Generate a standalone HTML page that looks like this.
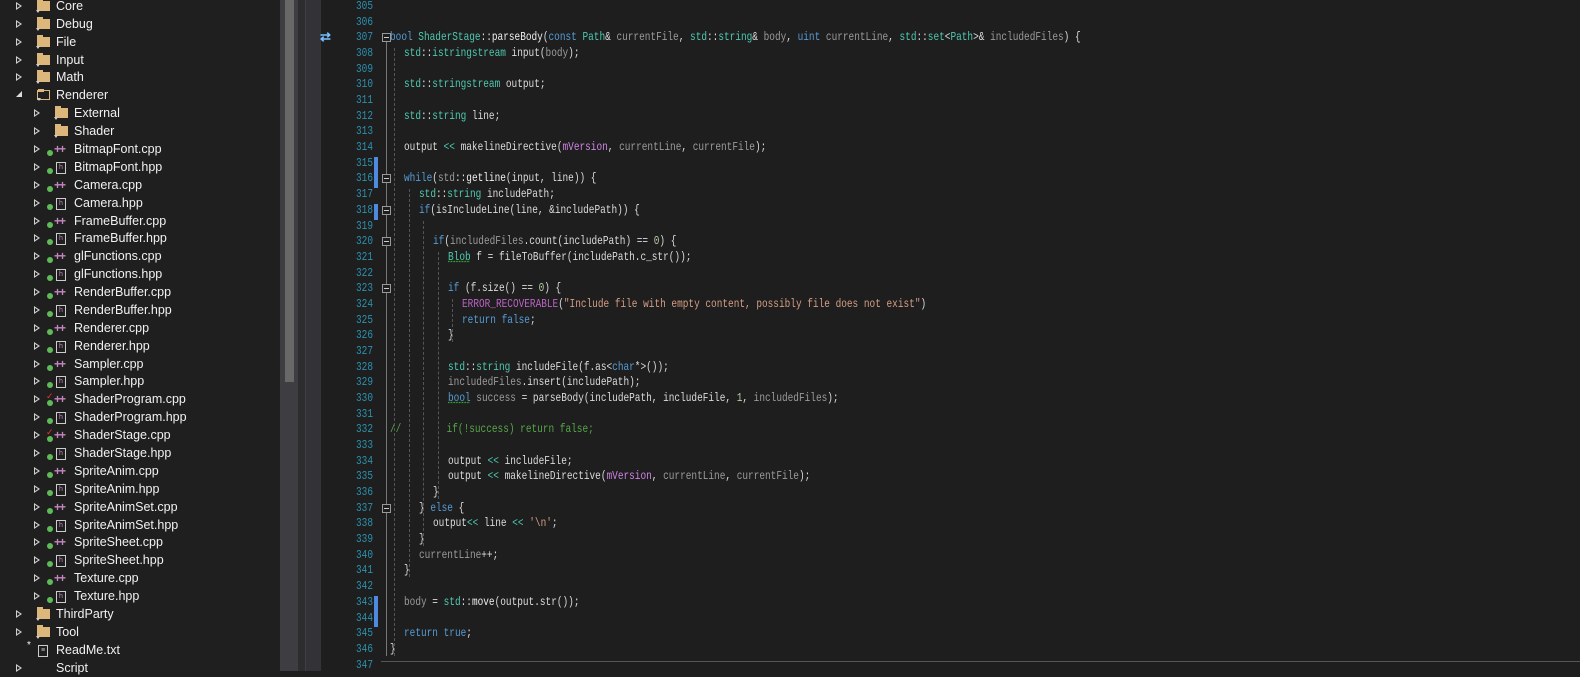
<!DOCTYPE html>
<html><head><style>
body{margin:0;width:1580px;height:671px;overflow:hidden;background:#1e1e1e;position:relative;font-family:"Liberation Sans",sans-serif}
#side{position:absolute;left:0;top:0;width:280px;height:671px;background:#1f1f1f}
.r{position:absolute;height:18px;line-height:18px;font-size:12.5px;color:#f1f1f1;white-space:nowrap}
.tri{position:absolute;top:5px;width:0;height:0;border-left:6px solid #d0d0d0;border-top:4px solid transparent;border-bottom:4px solid transparent}
.tri:after{content:"";position:absolute;left:-5px;top:-2px;border-left:3px solid #1f1f1f;border-top:2px solid transparent;border-bottom:2px solid transparent}
.fold{position:absolute;top:4px;width:13px;height:10px;background:#dcb67a}
.fold:before{content:"";position:absolute;left:0;top:-2px;width:6px;height:3px;background:#dcb67a}
.fold i{position:absolute;left:-1px;bottom:-2px;border-top:3px solid #d0d0d0;border-left:2px solid transparent;border-right:2px solid transparent}
.cpp{position:absolute;top:0px;color:#c586c0;font-weight:bold;font-size:12px;letter-spacing:-2px}
.hpp{position:absolute;top:4px;width:8px;height:10px;border:1px solid #ccc;font-size:7px;line-height:10px;text-align:center;color:#c586c0}
.dot{position:absolute;top:10px;width:6px;height:6px;border-radius:3px;background:#5fbb58}
#sb{position:absolute;left:280px;top:0;width:18px;height:671px;background:#3e3e42}
#th{position:absolute;left:285px;top:0;width:9px;height:382px;background:#686868}
#s2{position:absolute;left:298px;top:0;width:7px;height:671px;background:#2d2d30}
#s3{position:absolute;left:305px;top:0;width:15px;height:671px;background:#333337;border-left:1px solid #3f3f46}
#code{position:absolute;left:0;top:-1px;font-family:"Liberation Mono",monospace;font-size:12px}
.l{position:absolute;height:15.68px;line-height:15.68px;white-space:pre;color:#dcdcdc;transform:scaleX(0.786);transform-origin:0 0}
.n{position:absolute;left:330px;width:55px;text-align:right;color:#2b91af;transform-origin:100% 0}
.k{color:#569cd6}.t{color:#4ec9b0}.p{color:#9b9b9b}.m{color:#d183e8}.s{color:#d69d85}.mc{color:#bd63c5}.c{color:#57a64a}.nu{color:#b5cea8}.w{color:#f0f0f0}
.cb{position:absolute;left:374px;width:4px;background:#4e8adf}
.fb{position:absolute;left:382px;width:7px;height:7px;border:1px solid #999;background:#1e1e1e}
.fb:after{content:"";position:absolute;left:1px;top:3px;width:5px;height:1px;background:#ccc}
.g{position:absolute;border-left:1px dashed #555}
</style></head><body>
<div id="side">
<div class="r" style="left:0;top:-3px"><span class="tri" style="left:16px"></span><span class="fold" style="left:37px"><i></i></span><span style="position:absolute;left:56px">Core</span></div>
<div class="r" style="left:0;top:15px"><span class="tri" style="left:16px"></span><span class="fold" style="left:37px"><i></i></span><span style="position:absolute;left:56px">Debug</span></div>
<div class="r" style="left:0;top:33px"><span class="tri" style="left:16px"></span><span class="fold" style="left:37px"><i></i></span><span style="position:absolute;left:56px">File</span></div>
<div class="r" style="left:0;top:51px"><span class="tri" style="left:16px"></span><span class="fold" style="left:37px"><i></i></span><span style="position:absolute;left:56px">Input</span></div>
<div class="r" style="left:0;top:68px"><span class="tri" style="left:16px"></span><span class="fold" style="left:37px"><i></i></span><span style="position:absolute;left:56px">Math</span></div>
<div class="r" style="left:0;top:86px"><span style="position:absolute;left:16px;top:5px;border-bottom:6px solid #ddd;border-left:6px solid transparent"></span><span class="fold" style="left:37px;background:none;border:1px solid #dcb67a;width:11px;height:8px"><i></i></span><span style="position:absolute;left:56px">Renderer</span></div>
<div id="items"></div>
</div>
<div id="sb"></div><div id="th"></div><div id="s2"></div><div id="s3"></div>
<div style="position:absolute;left:320px;top:29px;color:#75beff;font-size:13px;font-weight:bold">&#8644;</div>
<div style="position:absolute;left:381px;top:661px;width:1199px;height:1px;background:#555"></div>
<div id="code"></div>
<script>
var it=[["External","d"],["Shader","d"],["BitmapFont.cpp","c"],["BitmapFont.hpp","h"],["Camera.cpp","c"],["Camera.hpp","h"],["FrameBuffer.cpp","c"],["FrameBuffer.hpp","h"],["glFunctions.cpp","c"],["glFunctions.hpp","h"],["RenderBuffer.cpp","c"],["RenderBuffer.hpp","h"],["Renderer.cpp","c"],["Renderer.hpp","h"],["Sampler.cpp","c"],["Sampler.hpp","h"],["ShaderProgram.cpp","c","x"],["ShaderProgram.hpp","h"],["ShaderStage.cpp","c","x"],["ShaderStage.hpp","h"],["SpriteAnim.cpp","c"],["SpriteAnim.hpp","h"],["SpriteAnimSet.cpp","c"],["SpriteAnimSet.hpp","h"],["SpriteSheet.cpp","c"],["SpriteSheet.hpp","h"],["Texture.cpp","c"],["Texture.hpp","h"]];
var h="";
it.forEach(function(a,i){var y=-3+(i+6)*17.88;var ic;
if(a[1]=="d")ic='<span class="fold" style="left:55px"><i></i></span>';
else ic=(a[1]=="c"?'<span class="cpp" style="left:54px">++</span>':'<span class="hpp" style="left:56px">h</span>')+'<span class="dot" style="left:47px"></span>'+(a[2]?'<span style="position:absolute;left:46px;top:-3px;color:#e33;font-size:9px">&#10003;</span>':'');
h+='<div class="r" style="left:0;top:'+y+'px"><span class="tri" style="left:34px"></span>'+ic+'<span style="position:absolute;left:74px">'+a[0]+'</span></div>';});
[["ThirdParty"],["Tool"]].forEach(function(a,i){var y=-3+(34+i)*17.88;h+='<div class="r" style="left:0;top:'+y+'px"><span class="tri" style="left:16px"></span><span class="fold" style="left:37px"><i></i></span><span style="position:absolute;left:56px">'+a[0]+'</span></div>';});
h+='<div class="r" style="left:0;top:'+(-3+36*17.88)+'px"><span style="position:absolute;left:27px;top:-4px;font-size:10px">*</span><span class="hpp" style="left:38px;color:#ccc">&#8801;</span><span style="position:absolute;left:56px">ReadMe.txt</span></div>';
h+='<div class="r" style="left:0;top:'+(-3+37*17.88)+'px"><span class="tri" style="left:16px"></span><span style="position:absolute;left:56px">Script</span></div>';
document.getElementById("items").innerHTML=h;
var L={
307:[390,'<span class="k">bool</span> <span class="t">ShaderStage</span>::<span class="w">parseBody</span>(<span class="k">const</span> <span class="t">Path</span>&amp; <span class="p">currentFile</span>, <span class="t">std</span>::<span class="t">string</span>&amp; <span class="p">body</span>, <span class="k">uint</span> <span class="p">currentLine</span>, <span class="t">std</span>::<span class="t">set</span>&lt;<span class="t">Path</span>&gt;&amp; <span class="p">includedFiles</span>) {'],
308:[404,'<span class="t">std</span>::<span class="t">istringstream</span> input(<span class="p">body</span>);'],
310:[404,'<span class="t">std</span>::<span class="t">stringstream</span> output;'],
312:[404,'<span class="t">std</span>::<span class="t">string</span> line;'],
314:[404,'output <span class="t">&lt;&lt;</span> makelineDirective(<span class="m">mVersion</span>, <span class="p">currentLine</span>, <span class="p">currentFile</span>);'],
316:[404,'<span class="k">while</span>(<span class="p">std</span>::<span class="w">getline</span>(input, line)) {'],
317:[419,'<span class="t">std</span>::<span class="t">string</span> includePath;'],
318:[419,'<span class="k">if</span>(isIncludeLine(line, &amp;includePath)) {'],
320:[433,'<span class="k">if</span>(<span class="p">includedFiles</span>.count(includePath) == <span class="nu">0</span>) {'],
321:[448,'<span class="t" style="text-decoration:underline dotted #3c3">Blob</span> f = fileToBuffer(includePath.c_str());'],
323:[448,'<span class="k">if</span> (f.size() == <span class="nu">0</span>) {'],
324:[462,'<span class="mc">ERROR_RECOVERABLE</span>(<span class="s">"Include file with empty content, possibly file does not exist"</span>)'],
325:[462,'<span class="k">return</span> <span class="k">false</span>;'],
326:[448,'}'],
328:[448,'<span class="t">std</span>::<span class="t">string</span> includeFile(f.as&lt;<span class="k">char</span>*&gt;());'],
329:[448,'<span class="p">includedFiles</span>.insert(includePath);'],
330:[448,'<span class="k" style="text-decoration:underline dotted #3c3">bool</span> <span class="p">success</span> = parseBody(includePath, includeFile, <span class="nu">1</span>, <span class="p">includedFiles</span>);'],
332:[390,'<span class="c">//        if(!success) return false;</span>'],
334:[448,'output <span class="t">&lt;&lt;</span> includeFile;'],
335:[448,'output <span class="t">&lt;&lt;</span> makelineDirective(<span class="m">mVersion</span>, <span class="p">currentLine</span>, <span class="p">currentFile</span>);'],
336:[433,'}'],
337:[419,'} <span class="k">else</span> {'],
338:[433,'output<span class="t">&lt;&lt;</span> line <span class="t">&lt;&lt;</span> <span class="s">\'\\n\'</span>;'],
339:[419,'}'],
340:[419,'<span class="p">currentLine</span>++;'],
341:[404,'}'],
343:[404,'<span class="p">body</span> = <span class="t">std</span>::<span class="w">move</span>(output.str());'],
345:[404,'<span class="k">return</span> <span class="k">true</span>;'],
346:[390,'}']};
var c="";
for(var n=305;n<=347;n++){var y=(n-305)*15.68;
c+='<div class="l n" style="top:'+y+'px;left:318px">'+n+'</div>';
if(L[n])c+='<div class="l" style="left:'+L[n][0]+'px;top:'+y+'px">'+L[n][1]+'</div>';}
var T=function(n){return (n-305)*15.68;};
[315,316,318,343,344].forEach(function(n){c+='<div class="cb" style="top:'+(T(n)+1)+'px;height:15.68px"></div>';});
c+='<div style="position:absolute;left:386px;top:'+(T(307)+10)+'px;width:1px;height:'+(T(346)-T(307)+4)+'px;background:#777"></div>';
[307,316,318,320,323,337].forEach(function(n){c+='<div class="fb" style="top:'+(T(n)+3)+'px"></div>';});
[[394,308,346],[409,317,341],[423,319,339],[438,321,336],[452,324,326]].forEach(function(g){c+='<div class="g" style="left:'+g[0]+'px;top:'+(T(g[1])+2)+'px;height:'+(T(g[2])-T(g[1])+12)+'px"></div>';});
document.getElementById("code").innerHTML=c;
</script>
</body></html>
